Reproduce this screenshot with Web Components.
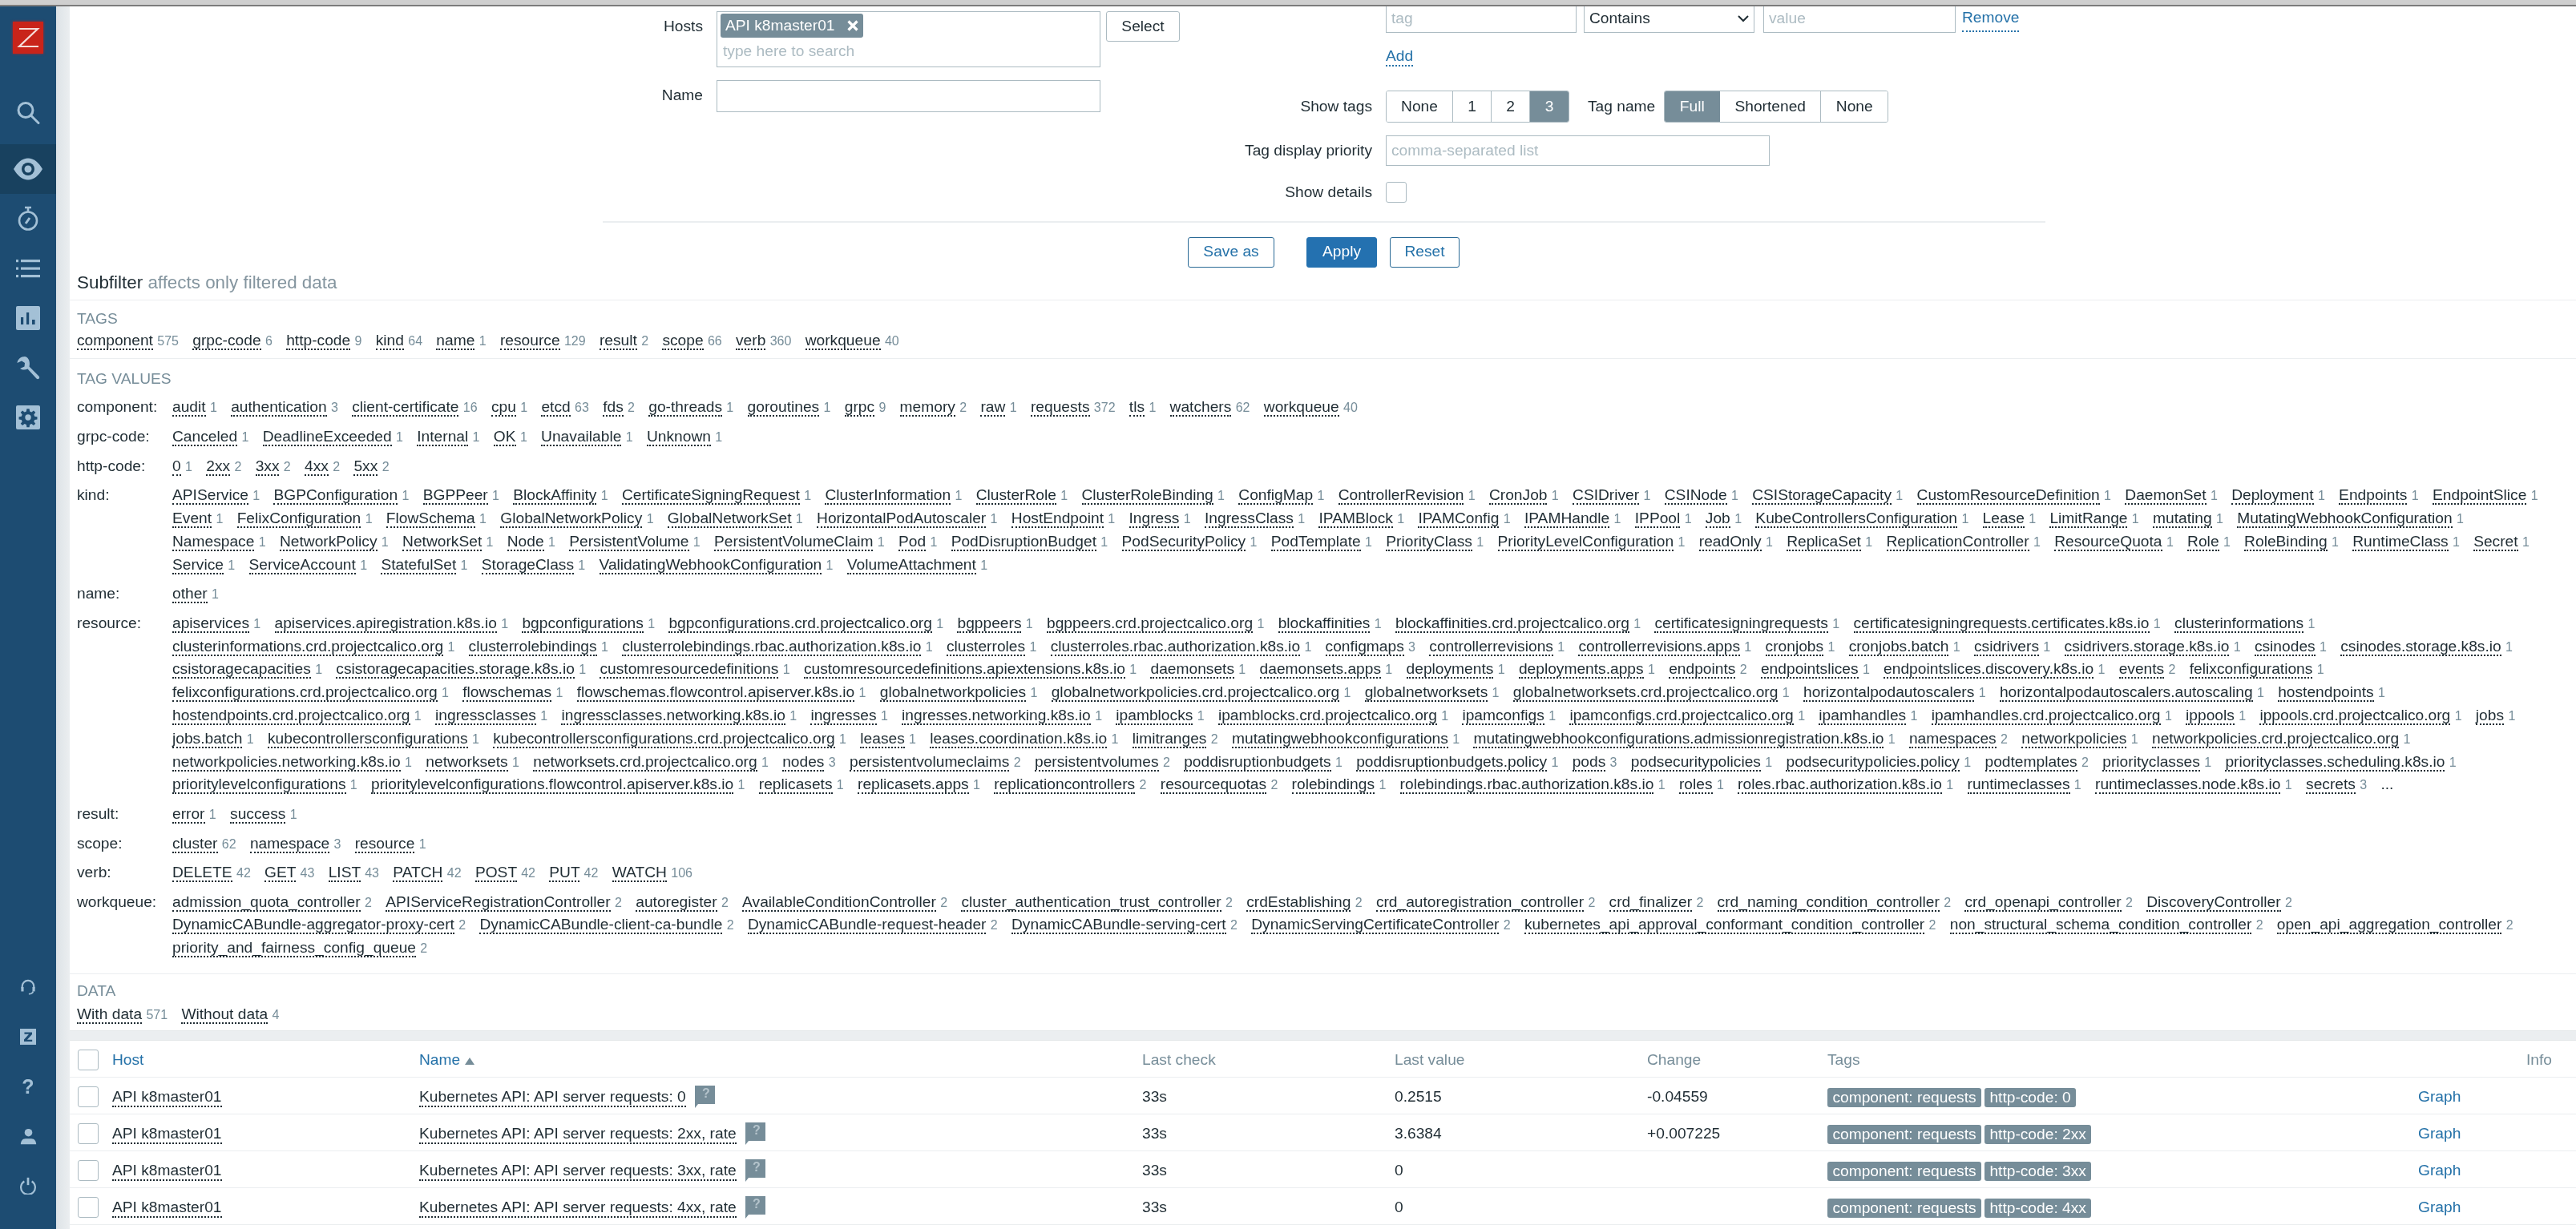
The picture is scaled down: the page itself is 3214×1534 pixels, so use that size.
<!DOCTYPE html>
<html><head><meta charset="utf-8">
<style>
html,body{margin:0;padding:0;background:#fff;width:3214px;height:1534px;overflow:hidden}
body{font:19.2px/28.8px "Liberation Sans",Arial,sans-serif;color:#1f2c33}
</style></head><body>
<z-app></z-app>
<script>
const base=`*{box-sizing:border-box}`;
function def(name,css,html){
  customElements.define(name,class extends HTMLElement{
    constructor(){super();const s=this.attachShadow({mode:'open'});
      s.innerHTML=`<style>${base}${css}</style>`+(typeof html==='function'?html(this):html);}
  });
}
const SB='#1d4c72';
const I={
 search:`<svg width="30" height="30" viewBox="0 0 30 30" fill="none" stroke="currentColor" stroke-width="3"><circle cx="12" cy="11.5" r="9"/><path d="M18.5 18l9.5 9.5" stroke-linecap="round"/></svg>`,
 eye:`<svg width="38" height="30" viewBox="0 0 38 30"><path fill="currentColor" d="M1 15C6 6.500 12 1.500 19 1.500S32 6.500 37 15c-5 8.500-11 13.500-18 13.500S6 23.500 1 15z"/><circle cx="19" cy="15" r="8" fill="#18415f"/><circle cx="19" cy="15" r="4.500" fill="currentColor"/></svg>`,
 timer:`<svg width="26" height="32" viewBox="0 0 26 32" fill="none" stroke="currentColor" stroke-width="2.600"><circle cx="13" cy="18.500" r="11"/><path d="M9 2h8M13 2v5"/><path d="M10 22l5-7" stroke-width="3"/></svg>`,
 list:`<svg width="32" height="30" viewBox="0 0 32 30" fill="currentColor"><rect x="1" y="4" width="3" height="3.200"/><rect x="7" y="4" width="24" height="3.200"/><rect x="1" y="13.500" width="3" height="3.200"/><rect x="7" y="13.500" width="24" height="3.200"/><rect x="1" y="23" width="3" height="3.200"/><rect x="7" y="23" width="24" height="3.200"/></svg>`,
 chart:`<svg width="30" height="30" viewBox="0 0 30 30"><rect width="30" height="30" rx="2" fill="currentColor"/><path fill="${SB}" d="M6 14h3.200v9H6zM13 8h3.200v15H13zM20 17h3.600v6H20z"/></svg>`,
 wrench:`<svg width="30" height="30" viewBox="0 0 30 30"><path fill="currentColor" d="M11 1c-5 0-9 3.500-9.500 8l5.500-2.500 4 2.500-.5 4.500-5.500 2.500c3 2 6.500 2 9.500.5L25.500 28.500c1.200 1 3 .8 3.500-.5.500-1.200 0-2-1-3L16.500 13.500C18 8 16 2 11 1z"/></svg>`,
 gear:`<svg width="30" height="30" viewBox="0 0 30 30"><rect width="30" height="30" rx="2" fill="currentColor"/><g transform="translate(15 15) scale(.82) translate(-15 -15)"><path fill="${SB}" d="M13 2h4l.6 4 2.700 1.100 3.200-2.400 2.800 2.800-2.400 3.200 1.100 2.700 4 .6v4l-4 .6-1.100 2.700 2.400 3.200-2.800 2.800-3.200-2.400-2.700 1.100-.6 4h-4l-.6-4-2.700-1.100-3.200 2.400-2.800-2.800 2.400-3.200-1.100-2.700-4-.6v-4l4-.6 1.100-2.700-2.400-3.200 2.800-2.800 3.200 2.400 2.700-1.100z"/><circle cx="15" cy="15" r="4.500" fill="currentColor"/></g></svg>`,
 head:`<svg width="20" height="20" viewBox="0 0 22 22" fill="none" stroke="currentColor" stroke-width="2.400"><path d="M3 13V10a8 8 0 0 1 16 0v3"/><rect x="1.500" y="11" width="3.500" height="6" fill="currentColor" stroke="none"/><rect x="17" y="11" width="3.500" height="6" fill="currentColor" stroke="none"/><path d="M18 17c-1 3-3 3.500-6 3.500" stroke-width="2"/></svg>`,
 zbox:`<svg width="20" height="20" viewBox="0 0 22 22"><rect width="22" height="22" fill="currentColor"/><path fill="${SB}" d="M6 5h10.500v2.600L9.800 15h6.900v2.500H5.500v-2.600L12.200 7.500H6z"/></svg>`,
 user:`<svg width="21" height="21" viewBox="0 0 24 24" fill="currentColor"><circle cx="12" cy="6.500" r="5.500"/><path d="M1 23c0-4 2-8 7-8h8c5 0 7 4 7 8z"/></svg>`,
 power:`<svg width="22" height="22" viewBox="0 0 26 26" fill="none" stroke="currentColor" stroke-width="2.600"><path d="M7.500 6.500a10.500 10.500 0 1 0 11 0"/><path d="M13 1v11" stroke-width="3.200"/></svg>`
};
customElements.define('z-ico',class extends HTMLElement{
  constructor(){super();this.attachShadow({mode:'open'});}
  connectedCallback(){const a=this.hasAttribute('active');
    this.shadowRoot.innerHTML=`<style>:host{display:flex;align-items:center;justify-content:center;width:70px;height:62px;color:#a3c0d6;background:${a?'#18415f':'transparent'}}svg{display:block}</style>${I[this.getAttribute('n')]}`;}
});
def('z-q',`:host{display:flex;align-items:center;justify-content:center;width:70px;height:62px;color:#a3c0d6;font:700 25px/1 "Liberation Sans",sans-serif}`,`?`);
def('z-sidebar',`:host{flex:none;width:70px;height:100%;background:${SB};display:flex;flex-direction:column;justify-content:space-between;align-items:center;padding-bottom:23px}
 .logo{width:38px;height:40px;margin:19px 0 43px;background:#c9241a;color:#f6dcd8;display:flex;align-items:center;justify-content:center;box-shadow:0 0 3px #a5272c}
 .g{display:flex;flex-direction:column;align-items:center}`,
 `<div class="g"><div class="logo"><svg width="29" height="28" viewBox="0 0 29 28" fill="none" stroke="currentColor" stroke-width="2.200"><path d="M3 3h23L3 25h24"/></svg></div>
 <z-ico n="search" style="margin-bottom:8px"></z-ico><z-ico n="eye" active></z-ico><z-ico n="timer"></z-ico><z-ico n="list"></z-ico><z-ico n="chart"></z-ico><z-ico n="wrench"></z-ico><z-ico n="gear"></z-ico></div>
 <div class="g"><z-ico n="head"></z-ico><z-ico n="zbox"></z-ico><z-q></z-q><z-ico n="user"></z-ico><z-ico n="power"></z-ico></div>`);

const fbox=`display:flex;align-items:center;border:1.600px solid #acbbc2;padding:0 6px;height:38px;background:#fff;white-space:nowrap`;
def('z-input',`:host{${fbox};color:#acbbc2}`,`<slot></slot>`);
def('z-select',`:host{${fbox};justify-content:space-between;color:#1f2c33}`,`<slot></slot><svg width="14" height="9" viewBox="0 0 14 9" fill="none" stroke="#1f2c33" stroke-width="2"><path d="M1 1l6 6 6-6"/></svg>`);
def('z-btn',`:host{display:inline-flex;align-items:center;justify-content:center;height:38px;padding:0 18px;background:#fff;border:1.600px solid #2a6a96;color:#2471a8;border-radius:3px;white-space:nowrap}
 :host([primary]){background:#2471b0;color:#fff;border-color:#2471b0}
 :host([alt]){border-color:#acbbc2;color:#1f2c33}`,`<slot></slot>`);
def('z-seg',`:host{display:flex;height:40px;border:1.600px solid #acbbc2;border-radius:3px;overflow:hidden}`,`<slot></slot>`);
def('z-seg-i',`:host{display:flex;align-items:center;justify-content:center;border-right:1.600px solid #acbbc2;color:#1f2c33;background:#fff}
 :host(:last-child){border-right:0}
 :host([on]){background:#768d99;color:#fff;border-color:#768d99}`,`<slot></slot>`);
def('z-link',`:host{display:inline;color:#2471a8;border-bottom:2px dotted #2471a8;padding-bottom:1px}`,`<slot></slot>`);
def('z-check',`:host{display:block;flex:none;width:26px;height:26px;border:1.600px solid #acbbc2;border-radius:3px;background:#fff}`,``);
def('z-chip',`:host{display:inline-flex;align-items:center;height:24px;padding:0 6.400px;background:#768d99;color:#fff;border-radius:3px;white-space:nowrap}`,`<slot></slot>`);

def('z-topfilter',`:host{display:flex;flex:none;height:268px;align-items:flex-start}
 .l{width:1385px;flex:none;display:grid;grid-template-columns:790px 479px auto;column-gap:17px;margin-top:6px;align-items:start}
 .r{flex:none;display:grid;grid-template-columns:240px auto;column-gap:17px;margin-top:-5px}
 label{text-align:right;display:block;line-height:38px}
 .ms{border:1.600px solid #acbbc2;height:70px;padding:2px 4px;display:block;color:#acbbc2}
 .ms div{line-height:30px;margin-top:2px;padding-left:3px}
 .tok{display:flex;align-items:center;width:178px;height:30px;padding:0 6px;background:#768d99;color:#fff;border-radius:3px;justify-content:space-between;white-space:nowrap}
 .x{display:flex;gap:9px;align-items:center;white-space:nowrap}
 .sel{margin-left:-10px}
 .nm{grid-column:2;margin-top:16px}
 .nl{margin-top:16px}
 .tn{margin:0 11px 0 23px}
 .t1{padding-top:3px}
 `,
 `<div class="l">
   <label>Hosts</label><div class="ms"><span class="tok">API k8master01 <svg width="14" height="14" viewBox="0 0 14 14" stroke="#fff" stroke-width="3.200"><path d="M1.500 1.500l11 11M12.500 1.500l-11 11"/></svg></span><div>type here to search</div></div><z-btn alt class="sel" style="width:92px">Select</z-btn>
   <label class="nl">Name</label><z-input class="nm" style="height:40px"></z-input>
 </div>
 <div class="r">
   <span></span><div class="x"><z-input class="t1" style="width:238px">tag</z-input><z-select class="t1" style="width:213px">Contains</z-select><z-input class="t1" style="width:240px;margin-left:2px">value</z-input><z-link style="margin-left:-1px;position:relative;top:2px">Remove</z-link></div>
   <span></span><div style="margin-top:15px;line-height:28px;height:44px"><z-link>Add</z-link></div>
   <label style="line-height:40px;margin-top:13px">Show tags</label><div class="x" style="margin-top:13px;gap:0"><z-seg><z-seg-i style="width:83px">None</z-seg-i><z-seg-i style="width:48px">1</z-seg-i><z-seg-i style="width:48px">2</z-seg-i><z-seg-i on style="width:48px">3</z-seg-i></z-seg><span class="tn">Tag name</span><z-seg><z-seg-i on style="width:69px">Full</z-seg-i><z-seg-i style="width:126px">Shortened</z-seg-i><z-seg-i style="width:83px">None</z-seg-i></z-seg></div>
   <label style="margin-top:16px">Tag display priority</label><z-input style="width:479px;margin-top:16px">comma-separated list</z-input>
   <label style="margin-top:19px;line-height:27px">Show details</label><div style="margin-top:20px"><z-check></z-check></div>
 </div>`);
def('z-actions',`:host{display:flex;flex:none;height:98px;padding-left:1395px;align-items:flex-start}
 .rule{height:1.600px;background:#ebeef0;width:1800px;margin:0 0 18px -730px}
 .b{display:flex}
 `,`<div><div class="rule"></div><div class="b"><z-btn style="width:108px">Save as</z-btn><z-btn primary style="width:88px;margin-left:40px">Apply</z-btn><z-btn style="width:87px;margin-left:16px">Reset</z-btn></div></div>`);
def('z-subhead',`:host{display:block;flex:none;height:0;padding-left:9px;font-size:22.400px;line-height:30px;transform:translateY(-36px)}
 i{font-style:normal;color:#84959f}`,`Subfilter <i>affects only filtered data</i>`);
function items(str){return str.split(',').map(s=>{s=s.trim();const k=s.lastIndexOf(' ');return s==='...'?`<span class="e">...</span>`:`<span class="it"><span class="a">${s.slice(0,k)}</span> <span class="n">${s.slice(k+1)}</span></span>`}).join('');}
const rowcss=`.ln{display:flex;height:28.800px;line-height:28.800px;white-space:pre}
 .it{margin-right:17.300px}.a{border-bottom:2px dotted #1f2c33}.n{color:#768d99;font-size:16px}`;
customElements.define('z-line',class extends HTMLElement{
  constructor(){super();this.attachShadow({mode:'open'});}
  connectedCallback(){const l=this.getAttribute('label');
   const lines=this.getAttribute('d').split('|');
   this.shadowRoot.innerHTML=`<style>${base}${rowcss}:host{display:grid;grid-template-columns:119px auto;padding-bottom:7.800px}:host([plain]){display:block;padding-bottom:0}</style>`+
    (l!==null?`<div>${l}</div>`:'')+`<div>${lines.map(x=>`<div class="ln">${items(x)}</div>`).join('')}</div>`;}
});
def('z-sec',`:host{display:block;flex:none;padding:0 0 0 9px;border-top:1.600px solid #ebeef0}
 h4{margin:0;font:inherit;color:#768d99;text-transform:uppercase;height:28.800px}`,
 e=>`<h4>${e.getAttribute('title')}</h4><slot></slot>`);
const cols=`grid-template-columns:43px 383px 902px 315px 315px 225px 737px 135px auto`;
def('z-tr',`:host{display:grid;${cols};height:46px;padding-left:10px;align-items:center;border-bottom:1.600px solid #ebeef0;white-space:nowrap;flex:none;padding-top:2px}`,`<slot></slot>`);
def('z-hint',`:host{display:inline-block;vertical-align:middle;margin-left:10px}svg{display:block}text{font:700 16px "Liberation Sans",sans-serif;fill:#b5c4cc}`,
 `<svg width="26" height="28" viewBox="0 0 26 28"><path fill="#768d99" d="M1 0h25v23H5l-4 5z"/><text x="10" y="15" >?</text></svg>`);
def('z-main',`:host{flex:1;display:flex;flex-direction:column;height:100%;overflow:hidden;background:#fff}`,`<slot></slot>`);
def('z-app',`:host{display:block;width:3214px;height:1534px;background:#fff;filter:blur(.55px)}
 .bar{height:8px;background:linear-gradient(#cfcfcf 0,#cfcfcf 5.500px,#7c7c7c 6px,#7c7c7c 8px)}
 .w{display:flex;height:1526px}
 .sh{flex:none;width:17px;background:linear-gradient(90deg,#dde3e7,#ebeef0)}
 .lnk{color:#2471a8}
 .th{color:#768d99}
 .chips{display:flex;gap:4px;margin-top:2px}
 .strip{height:13px;flex:none;background:#ebeef0;border-bottom:1.600px solid #e4e7e9}
 `,()=>{
 const rows=[['0','0.2515','-0.04559','0'],['2xx, rate','3.6384','+0.007225','2xx'],['3xx, rate','0','','3xx'],['4xx, rate','0','','4xx']];
 return `<div class="bar"></div><div class="w"><z-sidebar></z-sidebar><div class="sh"></div><z-main>
 <z-topfilter></z-topfilter><z-actions></z-actions>
 <z-subhead></z-subhead>
 <z-sec title="Tags" style="padding-top:9px"><z-line plain d="component 575,grpc-code 6,http-code 9,kind 64,name 1,resource 129,result 2,scope 66,verb 360,workqueue 40" style="margin:-1.500px 0 7.300px"></z-line></z-sec>
 <z-sec title="Tag values" style="padding-top:11px">
 <div style="height:6.200px"></div>
 <z-line label="component:" d="audit 1,authentication 3,client-certificate 16,cpu 1,etcd 63,fds 2,go-threads 1,goroutines 1,grpc 9,memory 2,raw 1,requests 372,tls 1,watchers 62,workqueue 40"></z-line>
 <z-line label="grpc-code:" d="Canceled 1,DeadlineExceeded 1,Internal 1,OK 1,Unavailable 1,Unknown 1"></z-line>
 <z-line label="http-code:" d="0 1,2xx 2,3xx 2,4xx 2,5xx 2"></z-line>
 <z-line label="kind:" d="APIService 1,BGPConfiguration 1,BGPPeer 1,BlockAffinity 1,CertificateSigningRequest 1,ClusterInformation 1,ClusterRole 1,ClusterRoleBinding 1,ConfigMap 1,ControllerRevision 1,CronJob 1,CSIDriver 1,CSINode 1,CSIStorageCapacity 1,CustomResourceDefinition 1,DaemonSet 1,Deployment 1,Endpoints 1,EndpointSlice 1|Event 1,FelixConfiguration 1,FlowSchema 1,GlobalNetworkPolicy 1,GlobalNetworkSet 1,HorizontalPodAutoscaler 1,HostEndpoint 1,Ingress 1,IngressClass 1,IPAMBlock 1,IPAMConfig 1,IPAMHandle 1,IPPool 1,Job 1,KubeControllersConfiguration 1,Lease 1,LimitRange 1,mutating 1,MutatingWebhookConfiguration 1|Namespace 1,NetworkPolicy 1,NetworkSet 1,Node 1,PersistentVolume 1,PersistentVolumeClaim 1,Pod 1,PodDisruptionBudget 1,PodSecurityPolicy 1,PodTemplate 1,PriorityClass 1,PriorityLevelConfiguration 1,readOnly 1,ReplicaSet 1,ReplicationController 1,ResourceQuota 1,Role 1,RoleBinding 1,RuntimeClass 1,Secret 1|Service 1,ServiceAccount 1,StatefulSet 1,StorageClass 1,ValidatingWebhookConfiguration 1,VolumeAttachment 1"></z-line>
 <z-line label="name:" d="other 1"></z-line>
 <z-line label="resource:" d="apiservices 1,apiservices.apiregistration.k8s.io 1,bgpconfigurations 1,bgpconfigurations.crd.projectcalico.org 1,bgppeers 1,bgppeers.crd.projectcalico.org 1,blockaffinities 1,blockaffinities.crd.projectcalico.org 1,certificatesigningrequests 1,certificatesigningrequests.certificates.k8s.io 1,clusterinformations 1|clusterinformations.crd.projectcalico.org 1,clusterrolebindings 1,clusterrolebindings.rbac.authorization.k8s.io 1,clusterroles 1,clusterroles.rbac.authorization.k8s.io 1,configmaps 3,controllerrevisions 1,controllerrevisions.apps 1,cronjobs 1,cronjobs.batch 1,csidrivers 1,csidrivers.storage.k8s.io 1,csinodes 1,csinodes.storage.k8s.io 1|csistoragecapacities 1,csistoragecapacities.storage.k8s.io 1,customresourcedefinitions 1,customresourcedefinitions.apiextensions.k8s.io 1,daemonsets 1,daemonsets.apps 1,deployments 1,deployments.apps 1,endpoints 2,endpointslices 1,endpointslices.discovery.k8s.io 1,events 2,felixconfigurations 1|felixconfigurations.crd.projectcalico.org 1,flowschemas 1,flowschemas.flowcontrol.apiserver.k8s.io 1,globalnetworkpolicies 1,globalnetworkpolicies.crd.projectcalico.org 1,globalnetworksets 1,globalnetworksets.crd.projectcalico.org 1,horizontalpodautoscalers 1,horizontalpodautoscalers.autoscaling 1,hostendpoints 1|hostendpoints.crd.projectcalico.org 1,ingressclasses 1,ingressclasses.networking.k8s.io 1,ingresses 1,ingresses.networking.k8s.io 1,ipamblocks 1,ipamblocks.crd.projectcalico.org 1,ipamconfigs 1,ipamconfigs.crd.projectcalico.org 1,ipamhandles 1,ipamhandles.crd.projectcalico.org 1,ippools 1,ippools.crd.projectcalico.org 1,jobs 1|jobs.batch 1,kubecontrollersconfigurations 1,kubecontrollersconfigurations.crd.projectcalico.org 1,leases 1,leases.coordination.k8s.io 1,limitranges 2,mutatingwebhookconfigurations 1,mutatingwebhookconfigurations.admissionregistration.k8s.io 1,namespaces 2,networkpolicies 1,networkpolicies.crd.projectcalico.org 1|networkpolicies.networking.k8s.io 1,networksets 1,networksets.crd.projectcalico.org 1,nodes 3,persistentvolumeclaims 2,persistentvolumes 2,poddisruptionbudgets 1,poddisruptionbudgets.policy 1,pods 3,podsecuritypolicies 1,podsecuritypolicies.policy 1,podtemplates 2,priorityclasses 1,priorityclasses.scheduling.k8s.io 1|prioritylevelconfigurations 1,prioritylevelconfigurations.flowcontrol.apiserver.k8s.io 1,replicasets 1,replicasets.apps 1,replicationcontrollers 2,resourcequotas 2,rolebindings 1,rolebindings.rbac.authorization.k8s.io 1,roles 1,roles.rbac.authorization.k8s.io 1,runtimeclasses 1,runtimeclasses.node.k8s.io 1,secrets 3,..."></z-line>
 <z-line label="result:" d="error 1,success 1"></z-line>
 <z-line label="scope:" d="cluster 62,namespace 3,resource 1"></z-line>
 <z-line label="verb:" d="DELETE 42,GET 43,LIST 43,PATCH 42,POST 42,PUT 42,WATCH 106"></z-line>
 <z-line label="workqueue:" d="admission_quota_controller 2,APIServiceRegistrationController 2,autoregister 2,AvailableConditionController 2,cluster_authentication_trust_controller 2,crdEstablishing 2,crd_autoregistration_controller 2,crd_finalizer 2,crd_naming_condition_controller 2,crd_openapi_controller 2,DiscoveryController 2|DynamicCABundle-aggregator-proxy-cert 2,DynamicCABundle-client-ca-bundle 2,DynamicCABundle-request-header 2,DynamicCABundle-serving-cert 2,DynamicServingCertificateController 2,kubernetes_api_approval_conformant_condition_controller 2,non_structural_schema_condition_controller 2,open_api_aggregation_controller 2|priority_and_fairness_config_queue 2"></z-line>
 <div style="height:9px"></div>
 </z-sec>
 <z-sec title="Data" style="padding-top:7px"><z-line plain d="With data 571,Without data 4" style="margin-bottom:6px"></z-line></z-sec>
 <div class="strip" style="border-top:1.600px solid #e4e7e9"></div>
 <z-tr><z-check></z-check><span class="lnk">Host</span><span><span class="lnk">Name</span> <svg width="12" height="9" viewBox="0 0 12 9"><path fill="#768d99" d="M6 0l6 9H0z"/></svg></span><span class="th">Last check</span><span class="th">Last value</span><span class="th">Change</span><span class="th">Tags</span><span></span><span class="th">Info</span></z-tr>
 ${rows.map(r=>`<z-tr><z-check></z-check><span><z-link style="color:#1f2c33;border-color:#1f2c33">API k8master01</z-link></span><span><z-link style="color:#1f2c33;border-color:#1f2c33">Kubernetes API: API server requests: ${r[0]}</z-link><z-hint></z-hint></span><span>33s</span><span>${r[1]}</span><span>${r[2]}</span><span class="chips"><z-chip>component: requests</z-chip><z-chip>http-code: ${r[3]}</z-chip></span><span class="lnk">Graph</span><span></span></z-tr>`).join('')}
 </z-main></div>`});
</script>
</body></html>
